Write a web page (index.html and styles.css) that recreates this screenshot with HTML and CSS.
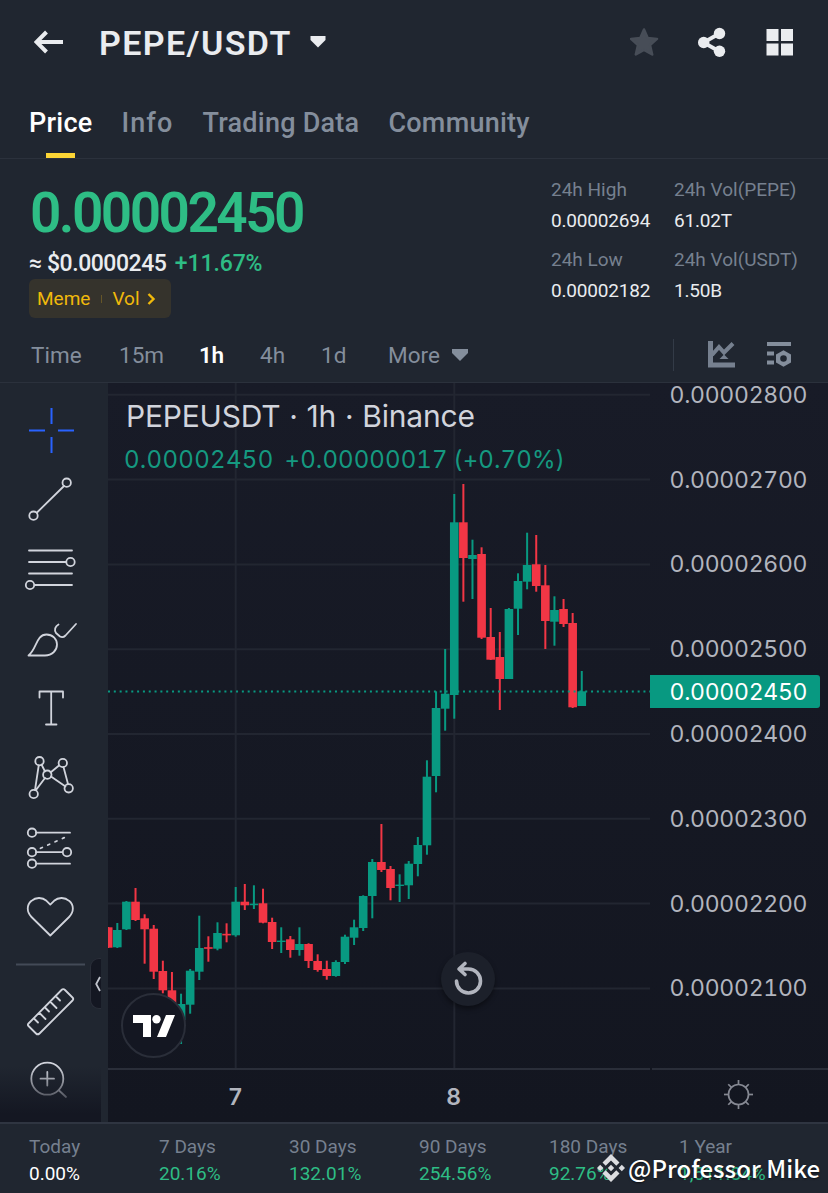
FILE: index.html
```
<!DOCTYPE html>
<html lang="en">
<head>
    <meta charset="UTF-8">
    <meta name="viewport" content="width=device-width, initial-scale=1.0">
    <title>PEPE/USDT</title>
    <link rel="stylesheet" href="styles.css">
</head>
<body>
    <header class="topbar">
        <svg class="back" width="30" height="24" viewBox="0 0 30 24">
            <path d="M29 12H3M12.500 2L2.500 12l10 10" fill="none" stroke="#eaecef" stroke-width="4"/>
        </svg>
        <h1>PEPE/USDT</h1>
        <svg class="caret" width="16" height="12" viewBox="0 0 16 12">
            <path d="M.5 0h15v4L8 11.500.5 4z" fill="#eaecef"/>
        </svg>
        <div class="actions">
            <svg width="30" height="30" viewBox="0 0 30 30">
                <path d="M14 2.500l3.700 8.600 9.300.8-7 6.100 2.200 9.500-8.200-4.500-8.200 4.500L8 18l-7-6.100 9.300-.8z" fill="#474d57" stroke="#474d57" stroke-width="2.500" stroke-linejoin="round"/>
            </svg>
            <svg width="30" height="30" viewBox="0 0 30 30">
                <path d="M21.500 6.500l-16 9 16 9" fill="none" stroke="#eaecef" stroke-width="3.800"/>
                <circle cx="5.700" cy="15.500" r="5.700" fill="#eaecef"/>
                <circle cx="21.500" cy="6.500" r="5.700" fill="#eaecef"/>
                <circle cx="21.500" cy="24.300" r="5.700" fill="#eaecef"/>
            </svg>
            <svg width="28" height="28" viewBox="0 0 28 28">
                <path d="M.5 1h12v12H.5zM15 1h12v12H15zM.5 15.500h12v12H.5zM15 15.500h12v12H15z" fill="#eaecef"/>
            </svg>
        </div>
    </header>

    <nav class="tabs">
        <a class="active">Price</a>
        <a class="info">Info</a>
        <a>Trading Data</a>
        <a>Community</a>
    </nav>

    <section class="summary">
        <div class="quote">
            <div class="last">0.00002450</div>
            <div class="fiat">≈ $0.0000245 <span class="up">+11.67%</span></div>
            <div class="tag">
                <span>Meme</span>
                <i></i>
                <span>Vol</span>
                <svg width="9" height="12" viewBox="0 0 9 12">
                    <path d="M1.500 1l5 5-5 5" fill="none" stroke="#f0b90b" stroke-width="2.400"/>
                </svg>
            </div>
        </div>
        <dl class="stats">
            <div><dt>24h High</dt><dd>0.00002694</dd></div>
            <div><dt>24h Vol(PEPE)</dt><dd>61.02T</dd></div>
            <div><dt>24h Low</dt><dd>0.00002182</dd></div>
            <div><dt>24h Vol(USDT)</dt><dd>1.50B</dd></div>
        </dl>
    </section>

    <div class="intervals">
        <span class="time">Time</span>
        <span class="m15">15m</span>
        <span class="h1 active">1h</span>
        <span class="h4">4h</span>
        <span class="d1">1d</span>
        <span class="more">More</span>
        <svg width="16" height="12" viewBox="0 0 16 12">
            <path d="M0 0h16v4l-8 8-8-8z" fill="#848e9c"/>
        </svg>
        <div class="tools">
            <svg width="27" height="27" viewBox="0 0 27 27" fill="none" stroke="#76808f">
                <path d="M2.500 0v24H27" stroke-width="5"/>
                <path d="M4 14l7-8 5 5.500L25 2.500" stroke-width="4"/>
                <path d="M16 13.500l4.500 4.500h-9z" fill="#76808f" stroke="none"/>
            </svg>
            <svg width="25" height="26" viewBox="0 0 25 26" fill="#848e9c">
                <path d="M0 1h24v4H0zM0 10.500h7v4H0zM0 19.500h7v4H0z"/>
                <path d="M16.500 9.200l7.500 4.200v8.200l-7.500 4.200L9 21.600v-8.200zm0 5a3.300 3.300 0 100 6.600 3.300 3.300 0 000-6.600z" fill-rule="evenodd"/>
            </svg>
        </div>
    </div>

    <main class="chart-area">
        <aside class="toolbar">
            <svg viewBox="0 383 101 739" width="101" height="739">
                <g class="cross">
                    <path d="M51.500 408v16M51.500 437v16M29 430.500h16M58 430.500h16"/>
                </g>
                <g class="icon">
                    <!-- trend line -->
                    <path d="M37 512.500L64 486"/>
                    <circle cx="33.500" cy="515.700" r="4.200"/>
                    <circle cx="66.700" cy="482.700" r="4.200"/>
                    <!-- fib levels -->
                    <path d="M29 550.500h43M29 562h37M29 573.500h43M35 585h37"/>
                    <circle cx="70.500" cy="562" r="4.200"/>
                    <circle cx="30" cy="585" r="4.200"/>
                    <!-- brush -->
                    <path d="M28.500 655.500C37 649 36 634.500 46.500 634.500c6 0 10.500 4.500 10.500 10 0 6-5 11-12 11zM58.500 624.500c-3.500 2-4.500 5.500-2.500 8.500l4 3.500c2 1 4 .5 5.500-1L76 624"/>
                    <!-- text -->
                    <path d="M39.500 697.500v-6h23.500v6M51.200 691.500v33M46 724.500h10.500"/>
                    <!-- pattern -->
                    <path d="M38.700 765.500L35 790M41.500 764.500l3.500 7M50.500 772.500l8.500-7M36 790l9-12M51 776.500l14.500 10M63.500 767l4.500 17"/>
                    <circle cx="39.500" cy="761.200" r="4.200"/>
                    <circle cx="62.800" cy="763" r="4.200"/>
                    <circle cx="47.300" cy="774.700" r="4.200"/>
                    <circle cx="33.700" cy="794" r="4.200"/>
                    <circle cx="68.700" cy="788.300" r="4.200"/>
                    <!-- position -->
                    <path d="M36 832.700h34M36 852.200h26M36 863.700h34"/>
                    <path d="M40.500 848.300L68 836" stroke-dasharray="2 6"/>
                    <circle cx="32" cy="832.700" r="4.200"/>
                    <circle cx="32" cy="852.200" r="4.200"/>
                    <circle cx="67" cy="852.200" r="4.200"/>
                    <circle cx="32" cy="863.700" r="4.200"/>
                    <!-- favourites -->
                    <path d="M50.300 935.500L31.500 917c-5-5-5-12 0-16.200 4.500-4 11-3.500 15 0l3.800 3.800 3.800-3.800c4-3.500 10.500-4 15 0 5 4.200 5 11.200 0 16.200z"/>
                    <!-- ruler -->
                    <path d="M28.500 1023.500l33-33.500c1-1 2.500-1 3.500 0l7.500 7.500c1 1 1 2 0 3l-33 33c-1 1-2.500 1-3.500 0l-7.500-7.500c-1-1-1-1.500 0-2.500zM34 1018.500l4 4M39.500 1013l6 6M45 1007.500l4 4M50.500 1002l6 6M56 996.500l4 4"/>
                    <!-- zoom in -->
                    <circle cx="47.300" cy="1078.700" r="16"/>
                    <path d="M47.300 1072v13.500M40.500 1078.700H54M59 1090.500l7 6.500"/>
                </g>
                <path class="split" d="M16 964.500h69"/>
            </svg>
            <div class="collapse">
                <svg width="6" height="16" viewBox="0 0 6 16">
                    <path d="M5 1L1.200 8 5 15" fill="none" stroke="#c1c4cd" stroke-width="1.800"/>
                </svg>
            </div>
        </aside>

        <div class="chart">
            <svg id="plot" viewBox="108 383 720 739" width="720" height="739"></svg>
            <div class="legend">
                <div class="pair">PEPEUSDT · 1h · Binance</div>
                <div class="change"><span>0.00002450</span><span>+0.00000017 (+0.70%)</span></div>
            </div>
            <div class="reset">
                <svg width="30" height="36" viewBox="0 0 30 36">
                    <path d="M3.500 21A12 12 0 1015.500 9H7M12 3.500L6 9l6 5.500" fill="none" stroke="#b2b5be" stroke-width="3.600" stroke-linecap="round" stroke-linejoin="round"/>
                </svg>
            </div>
            <div class="tv">
                <svg width="42" height="22" viewBox="0 0 42 22" fill="#fff">
                    <path d="M0 0h18v22h-8V8H0zM33 0h9l-9 22h-9z"/>
                    <circle cx="23.500" cy="4.200" r="4.200"/>
                </svg>
            </div>
        </div>
    </main>

    <footer class="performance">
        <div><span>Today</span><b class="flat">0.00%</b></div>
        <div><span>7 Days</span><b>20.16%</b></div>
        <div><span>30 Days</span><b>132.01%</b></div>
        <div><span>90 Days</span><b>254.56%</b></div>
        <div><span>180 Days</span><b>92.76%</b></div>
        <div><span>1 Year</span><b>1,511.84%</b></div>
    </footer>

    <div class="watermark">
        <svg width="28" height="28" viewBox="0 0 28 28" fill="#dcdde0">
            <path d="M14 0l8.500 8.500-3.200 3.200L14 6.400l-5.300 5.300-3.200-3.200zM14 28l8.500-8.500-3.200-3.200-5.300 5.300-5.300-5.300-3.200 3.200zM3.200 10.800L6.400 14l-3.200 3.200L0 14zM24.800 10.800L28 14l-3.200 3.200-3.200-3.200zM14 10.800l3.200 3.200-3.200 3.200-3.200-3.200z"/>
        </svg>
        <span>@Professor Mike</span>
    </div>

    <script src="chart.js"></script>
</body>
</html>
```
FILE: styles.css
```
* {
    box-sizing: border-box;
}
body {
    margin: 0;
    width: 828px;
    height: 1193px;
    overflow: hidden;
    position: relative;
    background: #202630;
    color: #eaecef;
    font-family: Roboto, "Liberation Sans", sans-serif;
}
svg {
    display: block;
    flex: none;
}

/* top bar */
.topbar {
    display: flex;
    align-items: center;
    height: 85px;
    padding: 0 34px 1px;
}
h1 {
    margin: 1px 0 0 35px;
    font-size: 34px;
    font-weight: 600;
    line-height: 40px;
    letter-spacing: 1.4px;
    width: 192px;
    white-space: nowrap;
}
.caret {
    margin-left: 19px;
}
.actions {
    display: flex;
    align-items: center;
    gap: 38px;
    margin-left: auto;
}

/* tabs */
.tabs {
    display: flex;
    gap: 29px;
    height: 74px;
    padding: 0 29px;
    border-bottom: 1px solid #2b313c;
    color: #848e9c;
    font-size: 27px;
    font-weight: 500;
    line-height: 76px;
    letter-spacing: 0.25px;
}
.tabs .info {
    letter-spacing: 1.1px;
}
.tabs .active {
    position: relative;
    color: #fff;
}
.tabs .active::after {
    content: "";
    position: absolute;
    left: 17px;
    bottom: 0;
    width: 29px;
    height: 5px;
    background: #fcd535;
}

/* price and 24h stats */
.summary {
    display: flex;
    justify-content: space-between;
    height: 169px;
    padding: 0 29px;
}
.last {
    margin: 24px 0 0 1px;
    color: #2ebd85;
    font-size: 55px;
    font-weight: 600;
    line-height: 60px;
    letter-spacing: -2.55px;
}
.fiat {
    margin-top: 7px;
    font-size: 23px;
    font-weight: 500;
    line-height: 28px;
    letter-spacing: -0.45px;
    white-space: nowrap;
}
.up {
    color: #2ebd85;
    margin-left: 3px;
    letter-spacing: -0.1px;
}
.tag {
    display: flex;
    align-items: center;
    width: 142px;
    height: 39px;
    margin-top: 1px;
    padding-left: 8px;
    border-radius: 6px;
    background: #35332c;
    color: #f0b90b;
    font-size: 19px;
}
.tag i {
    width: 1px;
    height: 8px;
    margin: 0 10px 0 11px;
    background: #665628;
}
.tag svg {
    margin-left: 7px;
}
.stats {
    display: grid;
    grid-template-columns: 123px 125px;
    grid-auto-rows: 70px;
    margin: 15px 0 0;
    font-size: 19px;
    line-height: 31px;
    white-space: nowrap;
}
.stats dt {
    color: #76808f;
}
.stats dd {
    margin: 0;
    letter-spacing: -0.2px;
}

/* interval picker */
.intervals {
    display: flex;
    align-items: center;
    height: 55px;
    padding: 0 36px 0 31px;
    border-bottom: 1px solid #2b313c;
    color: #848e9c;
    font-size: 22.5px;
}
.intervals span {
    padding-bottom: 1px;
}
.intervals .active {
    color: #fff;
    font-weight: 600;
    letter-spacing: -0.4px;
}
.time { width: 88px; }
.m15 { width: 80px; }
.h1 { width: 61px; }
.h4 { width: 61px; }
.d1 { width: 67px; }
.more { width: 64px; }
.tools {
    display: flex;
    align-items: center;
    gap: 32px;
    height: 32px;
    margin-left: auto;
    padding: 0 0 2px 34px;
    border-left: 1px solid #333b47;
}

/* chart */
.chart-area {
    display: flex;
    height: 739px;
}
.toolbar {
    position: relative;
    width: 108px;
}
.toolbar::after {
    content: "";
    position: absolute;
    left: 0;
    bottom: 0;
    width: 101px;
    height: 56px;
    background: linear-gradient(rgba(20, 23, 34, 0), #141722 85%);
}
.icon {
    fill: none;
    stroke: #d1d4dc;
    stroke-width: 1.8;
    stroke-linejoin: round;
    stroke-linecap: round;
}
.cross {
    stroke: #2962ff;
    stroke-width: 2;
}
.split {
    stroke: #434a57;
    stroke-width: 2;
}
.collapse {
    position: absolute;
    left: 90px;
    top: 575px;
    width: 11px;
    height: 51px;
    padding: 17px 0 0 4px;
    border: 1px solid #2a2e39;
    border-right: 0;
    border-radius: 9px 0 0 9px;
    background: #141722;
}
.chart {
    position: relative;
    width: 720px;
    background: linear-gradient(#181b27, #131620);
}
.grid {
    stroke: #222631;
    stroke-width: 2;
}
.axis {
    stroke: #2a2e39;
    stroke-width: 2;
}
.candle-up {
    fill: #089981;
}
.candle-down {
    fill: #f23645;
}
.price-line {
    stroke: #089981;
    stroke-width: 2;
    stroke-dasharray: 2 3.82;
}
.price-label {
    fill: #b2b5be;
    font: 23px Inter, sans-serif;
    font-feature-settings: "tnum";
}
.price-label.current {
    fill: #fff;
}
.day-label {
    fill: #b2b5be;
    font: 600 23px Inter, sans-serif;
    text-anchor: middle;
}
.sun {
    fill: none;
    stroke: #868993;
    stroke-width: 1.7;
}
.legend {
    position: absolute;
    left: 16px;
    top: 13px;
    font-family: Inter, sans-serif;
    white-space: nowrap;
}
.pair {
    padding-left: 2px;
    color: #d1d4dc;
    font-size: 30px;
    line-height: 40px;
    letter-spacing: -0.2px;
    word-spacing: 0.6px;
}
.change {
    display: flex;
    gap: 11px;
    margin-top: 7px;
    color: #159980;
    font-size: 24px;
    line-height: 34px;
    letter-spacing: 0.3px;
    font-feature-settings: "tnum";
}
.change span + span {
    word-spacing: -1px;
    letter-spacing: 0.1px;
}
.reset,
.tv {
    position: absolute;
    display: flex;
    align-items: center;
    justify-content: center;
    border-radius: 50%;
}
.reset {
    left: 333px;
    top: 569px;
    width: 54px;
    height: 54px;
    padding-bottom: 2px;
    background: #1c202a;
    box-shadow: 0 3px 5px rgba(0, 0, 0, 0.4);
}
.tv {
    left: 13px;
    top: 610px;
    width: 65px;
    height: 65px;
    border: 2px solid #2a2e39;
    background: #141722;
}

/* performance row */
.performance {
    display: grid;
    grid-template-columns: repeat(6, 130px);
    height: 71px;
    padding: 9px 0 0 29px;
    border-top: 2px solid #2f3541;
    font-size: 19px;
    line-height: 27px;
    white-space: nowrap;
}
.performance span {
    display: block;
    color: #76808f;
}
.performance b {
    color: #2ebd85;
    font-weight: 400;
}
.performance .flat {
    color: #fff;
}
.watermark {
    position: absolute;
    left: 597px;
    top: 1151px;
    display: flex;
    align-items: center;
    gap: 3px;
    color: #fff;
    font: 500 24px/34px "Noto Sans CJK SC", sans-serif;
    letter-spacing: 0.05px;
    white-space: nowrap;
    text-shadow: 0 1px 2px rgba(0, 0, 0, 0.6);
}
```
FILE: chart.js
```
const NS = "http://www.w3.org/2000/svg";
const plot = document.getElementById("plot");

// direction, high, body top, body bottom, low
const candles = [
    ["d", 927, 927.3, 947.7, 948], ["u", 923, 930, 947.3, 948], ["u", 901, 901.7, 929.3, 930],
    ["d", 888, 901.7, 920, 921], ["d", 914.3, 918.3, 929.3, 963.7], ["d", 925, 928.7, 971.7, 979],
    ["d", 960.7, 971, 990.3, 993.3], ["d", 972, 990.3, 1004, 1005], ["u", 993.7, 1004, 1020, 1044],
    ["u", 969, 970.7, 1004.7, 1013.7], ["u", 915.7, 948, 971.7, 980], ["d", 936.3, 947.2, 948.8, 961.7],
    ["u", 922.3, 933, 948.7, 950.3], ["d", 923.3, 933.8, 935.4, 942.3], ["u", 887, 901.7, 935.3, 936.7],
    ["d", 884, 901.7, 905.3, 910], ["u", 885.3, 903.7, 905.2, 909], ["d", 888.7, 903.3, 922.7, 923.3],
    ["d", 917.7, 922, 942, 949], ["u", 927.3, 940.6, 942, 953], ["d", 936, 939.3, 950, 957.7],
    ["u", 927.3, 944, 950, 955.7], ["d", 943.3, 944, 961, 968], ["d", 954.3, 961, 970, 971.7],
    ["d", 960.7, 969, 976, 979.7], ["u", 960.3, 962, 976, 976.7], ["u", 934.7, 936.7, 962, 964],
    ["u", 919.7, 927.3, 937.7, 945], ["u", 895.3, 896, 928, 931], ["u", 859, 862, 896, 918.3],
    ["d", 824, 862, 870, 872], ["d", 866, 869, 888, 900.3], ["u", 874.3, 884.6, 886, 902],
    ["u", 861, 863.7, 885.3, 899], ["u", 837, 845, 864, 876.3], ["u", 760.3, 776.7, 845.3, 854.7],
    ["u", 691.3, 708, 776, 792.3], ["u", 649, 693.7, 708.7, 730.7], ["u", 494, 522.3, 695, 718.7],
    ["d", 484, 522.3, 558, 601.7], ["u", 539.7, 555, 559, 599], ["d", 547.3, 554, 637.7, 639],
    ["d", 608, 637, 659.7, 660], ["d", 632, 657, 679, 710], ["u", 608, 609, 679, 679],
    ["u", 573.3, 581, 608.7, 635], ["u", 532.7, 565, 581.7, 589.3], ["d", 535, 564.3, 586, 591.7],
    ["d", 565, 585.3, 621, 649], ["u", 596.3, 610, 621.7, 645.7], ["d", 599, 609, 624, 627],
    ["d", 613, 623, 707.3, 708], ["u", 671, 691.3, 706, 706]
];

function add(tag, attrs, text) {
    const el = document.createElementNS(NS, tag);
    for (const key in attrs) el.setAttribute(key, attrs[key]);
    if (text) el.textContent = text;
    plot.appendChild(el);
}

// grid and price scale
for (let i = 0; i < 8; i++) {
    const y = 394.8 + i * 84.8;
    add("path", { class: "grid", d: `M108 ${y}H650` });
    add("text", { class: "price-label", x: 669.5, y: y + 7.9, textLength: 138 }, "0.0000" + (2800 - i * 100));
}
add("path", { class: "grid", d: "M235.700 383V1068M454.300 383V1068" });
add("path", { class: "axis", d: "M108 1069H650M652 1069H828" });

candles.forEach(([dir, high, top, bottom, low], i) => {
    const x = 108.2 + i * 9.107;
    const cls = dir === "u" ? "candle-up" : "candle-down";
    add("rect", { class: cls, x: x - 1, y: high, width: 2, height: low - high });
    add("rect", { class: cls, x: x - 4.3, y: top, width: 8.6, height: bottom - top });
});

// last price
add("path", { class: "price-line", d: "M108 691.500H650" });
add("path", { class: "candle-up", d: "M650 675h167a3 3 0 013 3v27a3 3 0 01-3 3H650z" });
add("text", { class: "price-label current", x: 669.5, y: 700, textLength: 138 }, "0.00002450");

add("text", { class: "day-label", x: 235.5, y: 1105 }, "7");
add("text", { class: "day-label", x: 453.5, y: 1105 }, "8");

// scale settings
add("circle", { class: "sun", cx: 738.5, cy: 1094.5, r: 10 });
for (let a = 0; a < 8; a++) {
    add("path", { class: "sun", d: "M748.500 1094.500h4.500", transform: `rotate(${a * 45} 738.5 1094.5)` });
}
```
